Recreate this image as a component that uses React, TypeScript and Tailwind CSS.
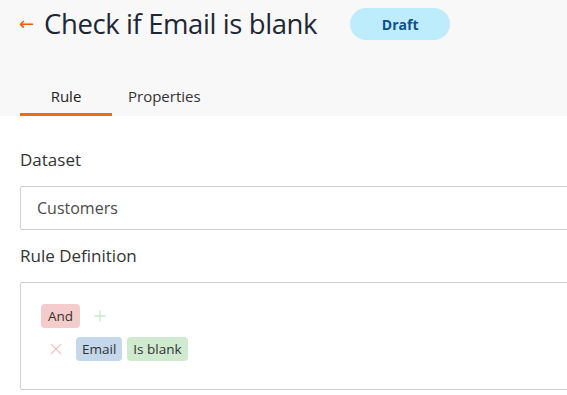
export default function App() {
  return (
    <div className="w-[567px] h-[395px] overflow-hidden bg-white text-[#333] font-['Open_Sans',sans-serif]">
      <div className="bg-[#f8f8f8] h-[116px] flex flex-col">
        <div className="flex items-center h-[48px] pl-[19px]">
          <span className="text-[#f05a0a] text-[18px] leading-none w-[25px] font-['DejaVu_Sans',sans-serif]">←</span>
          <h1 className="text-[27.5px] text-[#1e2733] tracking-[-0.4px]">Check if Email is blank</h1>
          <span className="ml-[33px] w-[100px] h-[32px] rounded-full bg-[#bdedfd] text-[#0e4f8c] text-[14px] font-bold flex items-center justify-center">
            Draft
          </span>
        </div>
        <div className="mt-auto flex items-center pl-[20px] text-[15px] leading-[20px]">
          <div className="w-[92px] h-[35px] pb-[2px] flex items-center justify-center border-b-[3px] border-[#f26b11] text-[#222]">Rule</div>
          <div className="ml-[16px] h-[35px] pb-[2px] flex items-center border-b-[3px] border-transparent text-[#333]">Properties</div>
        </div>
      </div>
      <div className="pl-[20px] w-[600px]">
        <div className="text-[17px] text-[#333] mt-[32px] leading-[24px]">Dataset</div>
        <div className="mt-[14px] h-[44px] border border-[#ccd1d8] rounded-[2px] flex items-center pl-[16px] text-[16px] text-[#4a4a4a]">
          Customers
        </div>
        <div className="text-[17px] text-[#333] mt-[14px] leading-[24px]">Rule Definition</div>
        <div className="mt-[14px] h-[108px] border border-[#ccd1d8] rounded-[2px] pl-[20px] pt-[21px] text-[13.5px] text-[#333]">
          <div className="flex items-center gap-[14px]">
            <span className="h-[24px] px-[7px] rounded-[4px] bg-[#f4cccc] flex items-center">And</span>
            <svg width="12" height="12" viewBox="0 0 12 12" className="stroke-[#c9e8c9]" strokeWidth="1.3">
              <path d="M6 0.5v11M0.5 6h11" />
            </svg>
          </div>
          <div className="flex items-center mt-[9px]">
            <svg width="12" height="12" viewBox="0 0 12 12" className="ml-[9px] stroke-[#f1c6c6]" strokeWidth="1.3">
              <path d="M1 1l10 10M11 1L1 11" />
            </svg>
            <span className="ml-[14px] h-[24px] px-[6px] rounded-[4px] bg-[#c4d7eb] flex items-center">Email</span>
            <span className="ml-[5px] h-[24px] px-[6px] rounded-[4px] bg-[#cfeacf] flex items-center">Is blank</span>
          </div>
        </div>
      </div>
    </div>
  )
}
